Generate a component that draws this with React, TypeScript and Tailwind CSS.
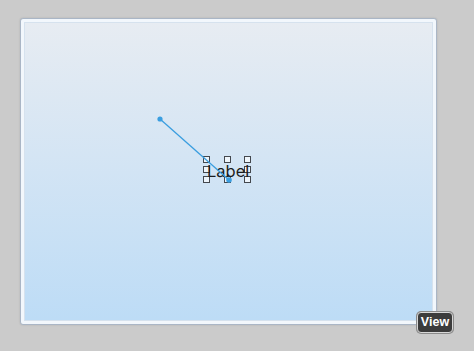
import React from "react";

function Handle({ x, y }: { x: number; y: number }) {
  return (
    <div
      className="absolute w-[7px] h-[7px] border border-[#44484e] bg-white/60"
      style={{ left: x, top: y }}
    />
  );
}

export default function App() {
  const handles = [
    [0, 0], [21, 0], [41, 0],
    [0, 10], [41, 10],
    [0, 20], [21, 20], [41, 20],
  ];
  return (
    <div className="relative w-[474px] h-[351px] bg-[#cbcbcb] pt-[18px] pl-[20px] font-['Liberation_Sans',sans-serif]">
      <div className="w-[417px] h-[307px] rounded-[3px] border border-[#aab6c6] bg-[#f2f7fc] p-[3px] shadow-[0_0_2px_rgba(0,0,0,0.15)]">
        <div className="relative w-full h-full border border-[#d6e2ee] bg-gradient-to-b from-[#e7ecf2] to-[#bddcf6] overflow-hidden">
          <div className="absolute left-[178px] top-[133px] w-[49px] h-[28px]">
            {handles.map(([x, y], i) => (
              <Handle key={i} x={x} y={y} />
            ))}
            <span className="absolute left-[4px] top-[5px] text-[16.5px] leading-[20px] text-[#1c1c1c] font-['Inter',sans-serif]">
              Label
            </span>
          </div>
          <svg className="absolute left-0 top-0" width="409" height="299">
            <line x1="135" y1="96" x2="204" y2="157" stroke="#3a9ee0" strokeWidth="1.3" />
            <circle cx="135" cy="96" r="2.6" fill="#3a9ee0" />
            <circle cx="204" cy="157" r="2.8" fill="#3a9ee0" />
          </svg>
        </div>
      </div>
      <div className="absolute left-[417px] top-[312px] h-[21px] w-[36px] flex items-center justify-center rounded-[4px] bg-[#3c3c3c] border border-[#d8d8d8] shadow-[0_0_0_1px_#8a8a8a] text-white text-[12.5px] font-bold">
        View
      </div>
    </div>
  );
}
